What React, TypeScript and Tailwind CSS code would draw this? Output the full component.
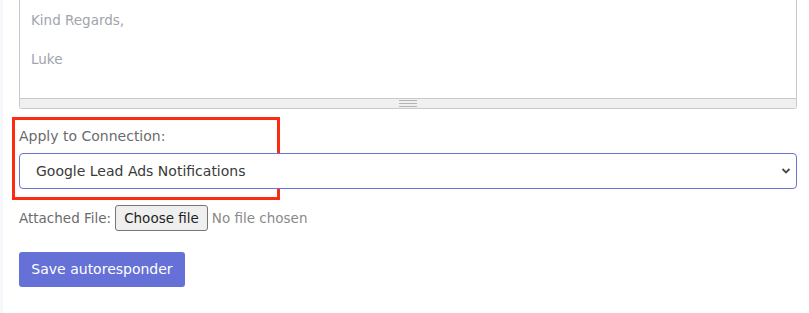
import React from "react";

const font = { fontFamily: "'DejaVu Sans', 'Noto Sans', sans-serif" };

export default function App() {
  return (
    <div className="flex h-[313px] w-[809px] overflow-hidden bg-white" style={font}>
      <div className="w-[3px] shrink-0 bg-[#f7f8fb]" />
      <div className="flex w-[794px] flex-col pl-4">
        {/* message body, scrolled so its top is off screen */}
        <div className="flex h-[109px] flex-col rounded-b-[3px] border-x border-b border-[#c9c9c9]">
          <div className="flex flex-1 flex-col pl-[11px] text-[13.5px] text-[#a0a4ab]">
            <p className="mt-[10px] leading-[20px]">Kind Regards,</p>
            <p className="mt-[19px] leading-[20px]">Luke</p>
          </div>
          <div className="flex h-[10px] items-center justify-center border-t border-[#c9c9c9] bg-[#f0f0f0]">
            <div className="flex w-[18px] flex-col gap-[2px]">
              <span className="h-px bg-[#b5b5b5]" />
              <span className="h-px bg-[#b5b5b5]" />
              <span className="h-px bg-[#b5b5b5]" />
            </div>
          </div>
        </div>

        <div className="relative mt-[17px]">
          <div className="pointer-events-none absolute left-[-7px] top-[-9px] h-[83px] w-[268px] border-[3px] border-[#ff2a12]" />
          <label className="block text-[14px] leading-[20px] text-[#6b6b6b]">Apply to Connection:</label>
          <div className="relative mt-[7px] flex h-[36px] w-[778px] items-center rounded-[4px] border border-[#6a73d6] bg-white pl-4">
            <span className="text-[14px] text-[#3a3a3a]">Google Lead Ads Notifications</span>
            <svg className="absolute right-[5px] top-[13px]" width="10" height="8" viewBox="0 0 10 8">
              <path d="M1.5 2 L5 5.5 L8.5 2" fill="none" stroke="#4a4a4a" strokeWidth="1.8" />
            </svg>
          </div>
        </div>

        <div className="mt-[16px] flex items-center text-[13.5px]">
          <span className="text-[#6b6b6b]">Attached File:</span>
          <span className="ml-[4px] flex h-[26px] items-center rounded-[3px] border border-[#767676] bg-[#efefef] px-[8px] text-[#1f1f1f]">
            Choose file
          </span>
          <span className="ml-[4px] text-[#8a8a8a]">No file chosen</span>
        </div>

        <button className="mt-[21px] flex h-[35px] w-[166px] items-center justify-center rounded-[3px] bg-[#6571d6] text-[14px] text-white">
          Save autoresponder
        </button>
      </div>
    </div>
  );
}
